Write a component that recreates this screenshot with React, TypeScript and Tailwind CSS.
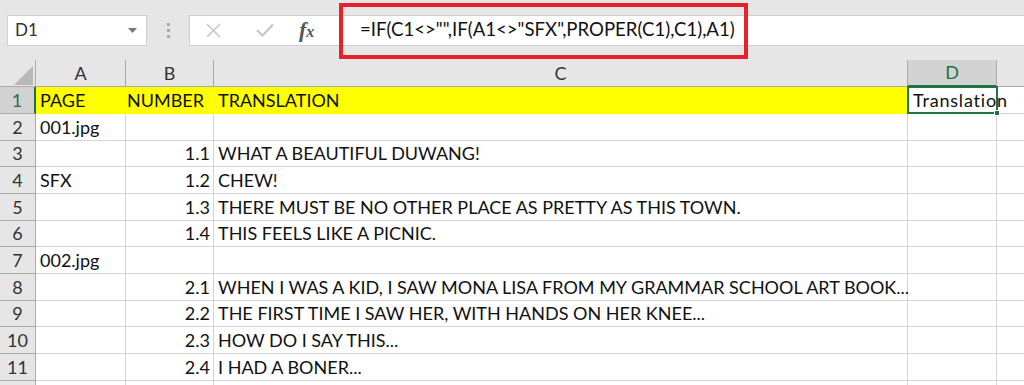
import React from "react";

const rows: { a: string; b: string; c: string; h: number }[] = [
  { a: "PAGE", b: "NUMBER", c: "TRANSLATION", h: 27 },
  { a: "001.jpg", b: "", c: "", h: 27 },
  { a: "", b: "1.1", c: "WHAT A BEAUTIFUL DUWANG!", h: 26 },
  { a: "SFX", b: "1.2", c: "CHEW!", h: 27 },
  { a: "", b: "1.3", c: "THERE MUST BE NO OTHER PLACE AS PRETTY AS THIS TOWN.", h: 27 },
  { a: "", b: "1.4", c: "THIS FEELS LIKE A PICNIC.", h: 26 },
  { a: "002.jpg", b: "", c: "", h: 27 },
  { a: "", b: "2.1", c: "WHEN I WAS A KID, I SAW MONA LISA FROM MY GRAMMAR SCHOOL ART BOOK...", h: 27 },
  { a: "", b: "2.2", c: "THE FIRST TIME I SAW HER, WITH HANDS ON HER KNEE...", h: 26 },
  { a: "", b: "2.3", c: "HOW DO I SAY THIS...", h: 27 },
  { a: "", b: "2.4", c: "I HAD A BONER...", h: 27 },
  { a: "", b: "", c: "", h: 27 },
];

const font = { fontFamily: "Lato, 'Open Sans', sans-serif" };

export default function App() {
  return (
    <div className="w-[1024px] h-[385px] overflow-hidden bg-white text-[#111]" style={font}>
      {/* Formula bar area */}
      <div className="h-[60px] bg-[#e6e6e6] flex items-center relative">
        <div className="ml-[7px] w-[140px] h-[31px] bg-white border border-[#d0d0d0] flex items-center justify-between pl-[7px] pr-[9px]">
          <span className="text-[17px] text-[#333]">D1</span>
          <svg width="9" height="5" viewBox="0 0 9 5"><path d="M0 0 L9 0 L4.5 5 Z" fill="#777" /></svg>
        </div>
        <div className="w-[42px] flex flex-col items-center gap-[3px]">
          <span className="w-[3px] h-[3px] bg-[#aaa]" />
          <span className="w-[3px] h-[3px] bg-[#aaa]" />
          <span className="w-[3px] h-[3px] bg-[#aaa]" />
        </div>
        <div className="flex-1 h-[31px] bg-white border-y border-l border-[#d0d0d0] flex items-center">
          <div className="w-[150px] flex items-center">
            <svg className="ml-[16px]" width="15" height="15" viewBox="0 0 15 15"><path d="M1 1 L14 14 M14 1 L1 14" stroke="#c8c8c8" strokeWidth="1.6" /></svg>
            <svg className="ml-[35px]" width="18" height="14" viewBox="0 0 18 14"><path d="M1 7 L6.5 12.5 L17 1.5" stroke="#c8c8c8" strokeWidth="2.4" fill="none" /></svg>
            <span className="ml-[25px] text-[22px] italic font-bold text-[#555] leading-none" style={{ fontFamily: "'Liberation Serif', serif" }}>
              f<span className="text-[16px]">x</span>
            </span>
          </div>
          <span className="ml-[20px] text-[18.6px] text-[#111] whitespace-nowrap">=IF(C1&lt;&gt;"",IF(A1&lt;&gt;"SFX",PROPER(C1),C1),A1)</span>
        </div>
        <div className="absolute left-[339px] top-[3px] w-[409px] h-[56px] border-[4px] border-[#e8202a]" />
      </div>

      {/* Column headers */}
      <div className="flex h-[27px] bg-[#e6e6e6] text-[18px] text-[#333]">
        <div className="w-[36px] border-r border-b border-[#ababab] relative">
          <svg className="absolute left-[14px] top-[6px]" width="19" height="19" viewBox="0 0 19 19"><path d="M19 0 L19 19 L0 19 Z" fill="#b8b8b8" /></svg>
        </div>
        <div className="w-[90px] border-r border-b border-[#ababab] flex items-center justify-center">A</div>
        <div className="w-[88px] border-r border-b border-[#ababab] flex items-center justify-center">B</div>
        <div className="w-[694px] border-r border-b border-[#ababab] flex items-center justify-center">C</div>
        <div className="w-[89px] border-r border-b-2 border-[#ababab] border-b-[#217346] bg-[#d2d2d2] text-[#217346] flex items-center justify-center">D</div>
        <div className="flex-1 border-b border-[#ababab]" />
      </div>

      {/* Rows */}
      {rows.map((r, i) => (
        <div key={i} className="flex text-[18px]" style={{ height: r.h }}>
          <div
            className={
              i === 0
                ? "w-[36px] shrink-0 bg-[#d2d2d2] border-r-2 border-r-[#217346] border-b border-b-[#ababab] text-[#217346] flex items-center justify-center"
                : "w-[36px] shrink-0 bg-[#e6e6e6] border-r border-b border-[#ababab] text-[#333] flex items-center justify-center"
            }
          >
            {i < 11 ? i + 1 : ""}
          </div>
          <div className={`w-[90px] shrink-0 border-r border-b border-[#d4d4d4] flex items-center pl-[4px] whitespace-nowrap ${i === 0 ? "bg-[#ffff00] border-r-[#ffff00] border-b-[#ffff00]" : ""}`}>
            {r.a}
          </div>
          <div className={`w-[88px] shrink-0 border-r border-b border-[#d4d4d4] flex items-center whitespace-nowrap ${i === 0 ? "bg-[#ffff00] border-r-[#ffff00] border-b-[#ffff00] justify-start pl-[1px]" : "justify-end pr-[3px]"}`}>
            {r.b}
          </div>
          <div className={`w-[694px] shrink-0 border-r border-b border-[#d4d4d4] flex items-center pl-[4px] whitespace-nowrap ${i === 0 ? "bg-[#ffff00] border-b-[#ffff00]" : ""}`}>
            {r.c}
          </div>
          <div className="w-[89px] shrink-0 border-r border-b border-[#d4d4d4] relative">
            {i === 0 && (
              <div className="absolute left-[-1px] top-[-1px] w-[91px] h-[28px] border-2 border-[#217346] z-10 flex items-center pl-[4px] whitespace-nowrap">
                <span className="relative z-20 tracking-[0.8px]">Translation</span>
                <div className="absolute right-[-4px] bottom-[-4px] w-[6px] h-[6px] bg-[#217346] border border-white" />
              </div>
            )}
          </div>
          <div className="flex-1 border-b border-[#d4d4d4]" />
        </div>
      ))}
    </div>
  );
}
